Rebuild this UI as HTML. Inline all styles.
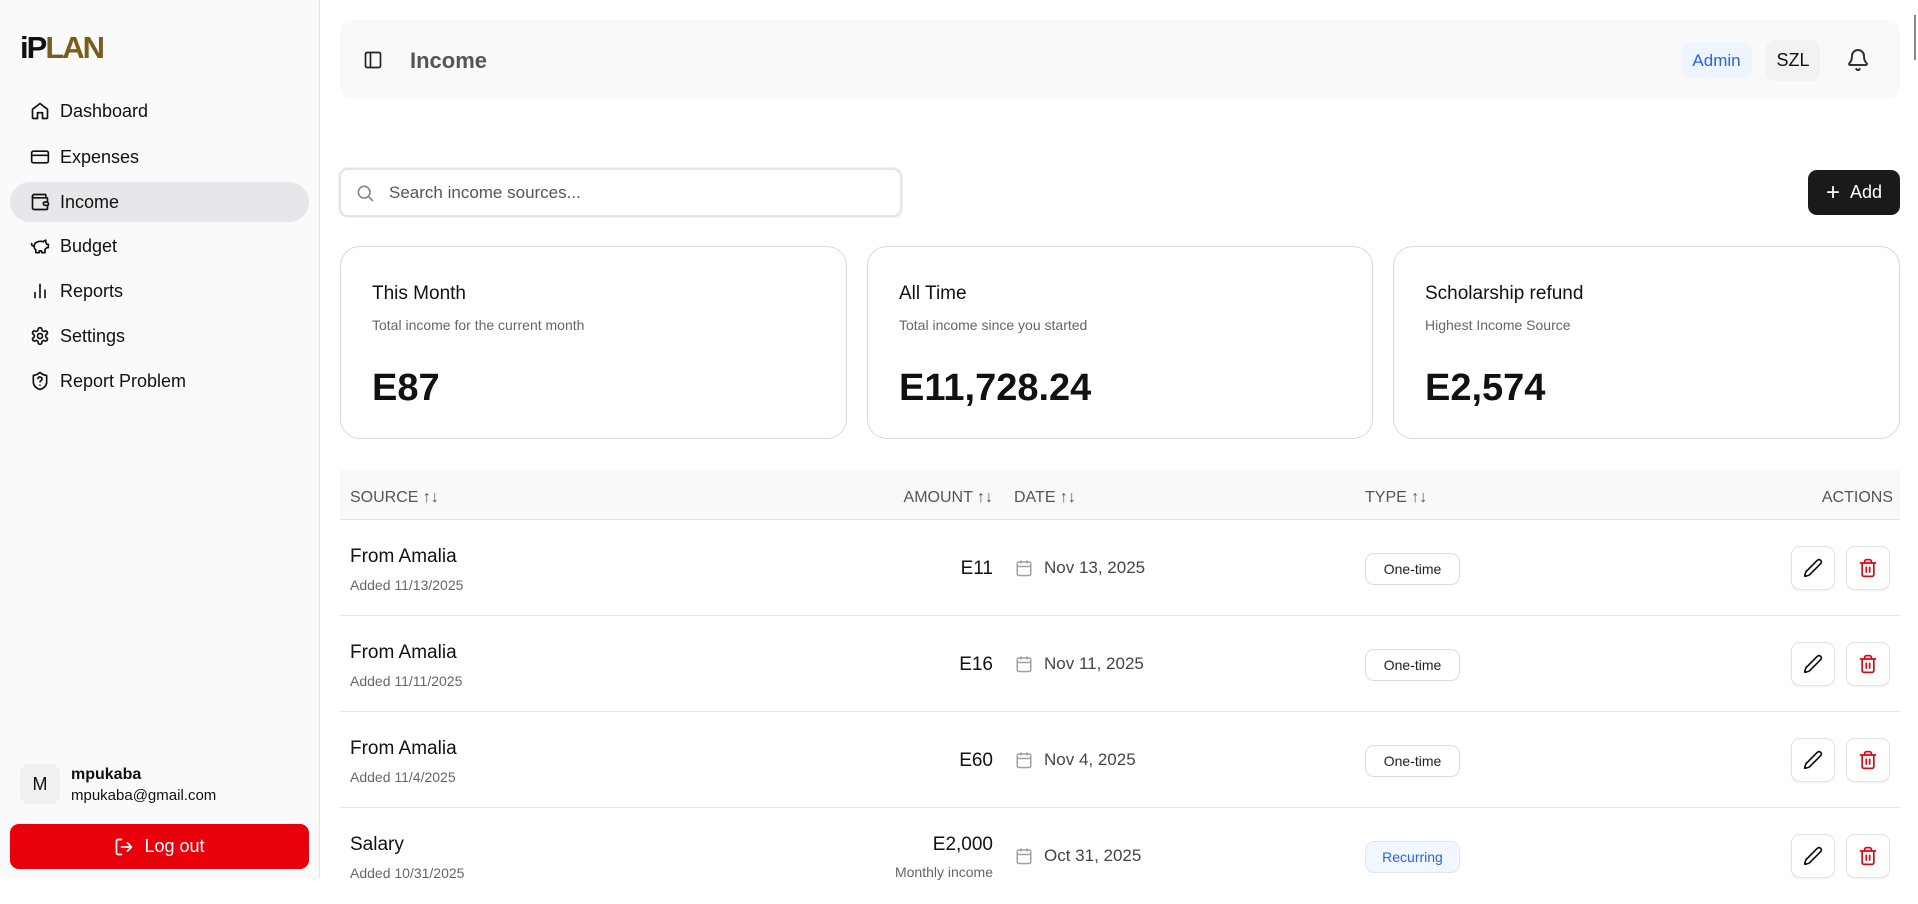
<!DOCTYPE html>
<html><head><meta charset="utf-8"><style>
*{box-sizing:border-box;margin:0;padding:0}
body{width:1918px;height:878px;overflow:hidden;background:#fff;font-family:"Liberation Sans",sans-serif;color:#111;position:relative}
.abs{position:absolute}
.side{left:0;top:0;width:320px;height:878px;background:#fafafa;border-right:1px solid #e5e5e5}
.nav{position:absolute;left:10px;width:299px;height:40px;border-radius:20px;display:flex;align-items:center;padding-left:20px;font-size:18px;color:#111}
.nav svg{width:20px;height:20px;margin-right:10px;fill:none;stroke:#111;stroke-width:2;stroke-linecap:round;stroke-linejoin:round}
.nav.active{background:#e6e7ea}
.card{position:absolute;top:246px;height:193px;border:1px solid #d9dadd;border-radius:20px;padding:0 31px}
.card .t{position:absolute;top:36px;font-size:19px;color:#111}
.card .s{position:absolute;top:70px;font-size:14px;color:#666}
.card .v{position:absolute;top:120px;font-size:38px;font-weight:bold;color:#111}
.th{position:absolute;top:489px;font-size:16px;color:#555;text-transform:uppercase}
.row{position:absolute;left:340px;width:1560px;height:96px;border-bottom:1px solid #e5e5e5}
.name{position:absolute;left:10px;font-size:19px;color:#111}
.added{position:absolute;left:10px;font-size:14px;color:#666}
.amt{position:absolute;right:907px;font-size:19px;color:#111}
.date{position:absolute;left:675px;font-size:17px;color:#444;display:flex;align-items:center}
.date svg{width:18px;height:18px;margin-right:11px;fill:none;stroke:#9aa0a6;stroke-width:2}
.pill{position:absolute;left:1025px;width:95px;height:32px;border:1px solid #ddd;border-radius:9px;font-size:14px;display:flex;align-items:center;justify-content:center;color:#222}
.btn{position:absolute;width:44px;height:44px;border:1px solid #e2e2e2;border-radius:9px;display:flex;align-items:center;justify-content:center;box-shadow:0 1px 2px rgba(0,0,0,.06)}
.btn svg{width:20px;height:20px;fill:none;stroke-width:2;stroke-linecap:round;stroke-linejoin:round}
</style></head><body>
<div class="abs side">
  <div class="abs" style="left:20px;top:30px;font-size:31px;font-weight:900;letter-spacing:-2px;font-family:'Liberation Sans',sans-serif"><span style="color:#111">i</span><span style="color:#111">P</span><span style="color:#7a5d1c">LAN</span></div>
  <div class="nav" style="top:91px"><svg viewBox="0 0 24 24"><path d="M3 10l9-7 9 7v10a1 1 0 0 1-1 1h-5v-7H9v7H4a1 1 0 0 1-1-1z"/></svg>Dashboard</div>
  <div class="nav" style="top:137px"><svg viewBox="0 0 24 24"><rect x="2" y="5" width="20" height="14" rx="2"/><path d="M2 10h20"/></svg>Expenses</div>
  <div class="nav active" style="top:182px"><svg viewBox="0 0 24 24"><path d="M19 7V4a1 1 0 0 0-1-1H5a2 2 0 0 0 0 4h15a1 1 0 0 1 1 1v4h-3a2 2 0 0 0 0 4h3a1 1 0 0 0 1-1v-2"/><path d="M3 5v14a2 2 0 0 0 2 2h15a1 1 0 0 0 1-1v-4"/></svg>Income</div>
  <div class="nav" style="top:226px"><svg viewBox="0 0 24 24"><path d="M19 5c-1.5 0-2.8 1.4-3 2-3.5-1.5-11-.3-11 5 0 1.8 0 3 2 4.5V20h4v-2h3v2h4v-4c1-.5 1.700-1 2-2h2v-4h-2c0-1-.5-1.500-1-2V5z"/><path d="M2 9v1c0 1.100.9 2 2 2h1"/></svg>Budget</div>
  <div class="nav" style="top:271px"><svg viewBox="0 0 24 24"><path d="M6 20v-6M12 20V4M18 20v-9"/></svg>Reports</div>
  <div class="nav" style="top:316px"><svg viewBox="0 0 24 24"><circle cx="12" cy="12" r="3"/><path d="M12.2 2h-.4a2 2 0 0 0-2 2v.2a2 2 0 0 1-1 1.7l-.4.3a2 2 0 0 1-2 0l-.2-.1a2 2 0 0 0-2.7.7l-.2.4a2 2 0 0 0 .7 2.7l.2.1a2 2 0 0 1 1 1.7v.5a2 2 0 0 1-1 1.7l-.2.1a2 2 0 0 0-.7 2.7l.2.4a2 2 0 0 0 2.7.7l.2-.1a2 2 0 0 1 2 0l.4.3a2 2 0 0 1 1 1.7v.2a2 2 0 0 0 2 2h.4a2 2 0 0 0 2-2v-.2a2 2 0 0 1 1-1.7l.4-.3a2 2 0 0 1 2 0l.2.1a2 2 0 0 0 2.7-.7l.2-.4a2 2 0 0 0-.7-2.7l-.2-.1a2 2 0 0 1-1-1.7v-.5a2 2 0 0 1 1-1.7l.2-.1a2 2 0 0 0 .7-2.7l-.2-.4a2 2 0 0 0-2.7-.7l-.2.1a2 2 0 0 1-2 0l-.4-.3a2 2 0 0 1-1-1.7V4a2 2 0 0 0-2-2z"/></svg>Settings</div>
  <div class="nav" style="top:361px"><svg viewBox="0 0 24 24"><path d="M20 13c0 5-3.5 7.5-7.7 9a1 1 0 0 1-.7 0C7.5 20.5 4 18 4 13V6a1 1 0 0 1 1-1c2 0 4.5-1.2 6.2-2.7a1.2 1.2 0 0 1 1.5 0C14.5 3.8 17 5 19 5a1 1 0 0 1 1 1z"/><path d="M9.5 9a2.5 2.5 0 0 1 4.9.8c0 1.700-2.4 2.200-2.4 3.200M12 17h.01"/></svg>Report Problem</div>
  <div class="abs" style="left:20px;top:764px;width:40px;height:40px;border-radius:10px;background:#f0f0f0;display:flex;align-items:center;justify-content:center;font-size:18px">M</div>
  <div class="abs" style="left:71px;top:766px;font-size:16px;font-weight:bold">mpukaba</div>
  <div class="abs" style="left:71px;top:787px;font-size:15px">mpukaba@gmail.com</div>
  <div class="abs" style="left:10px;top:824px;width:299px;height:45px;border-radius:9px;background:#e8000b;color:#fff;display:flex;align-items:center;justify-content:center;font-size:18px"><svg viewBox="0 0 24 24" width="20" height="20" style="fill:none;stroke:#fff;stroke-width:2;stroke-linecap:round;stroke-linejoin:round;margin-right:10px"><path d="M9 21H5a2 2 0 0 1-2-2V5a2 2 0 0 1 2-2h4M16 17l5-5-5-5M21 12H9"/></svg>Log out</div>
</div>
<div class="abs" style="left:1914px;top:15px;width:2px;height:45px;background:#888"></div>
<div class="abs" style="left:340px;top:20px;width:1560px;height:79px;background:#f9f9f9;border-radius:12px"></div>
<svg class="abs" style="left:363px;top:50px" width="20" height="20" viewBox="0 0 24 24" fill="none" stroke="#222" stroke-width="2"><rect x="3" y="3" width="18" height="18" rx="2"/><path d="M9 3v18"/></svg>
<div class="abs" style="left:410px;top:48px;font-size:22px;font-weight:bold;color:#555">Income</div>
<div class="abs" style="left:1681px;top:43px;width:71px;height:35px;border-radius:9px;background:#eef5ff;color:#2563eb;font-size:17px;display:flex;align-items:center;justify-content:center">Admin</div>
<div class="abs" style="left:1766px;top:40px;width:54px;height:41px;border-radius:9px;background:#f2f2f2;color:#111;font-size:18px;display:flex;align-items:center;justify-content:center">SZL</div>
<svg class="abs" style="left:1846px;top:48px" width="24" height="24" viewBox="0 0 24 24" fill="none" stroke="#333" stroke-width="2" stroke-linecap="round"><path d="M10.3 21a1.9 1.9 0 0 0 3.4 0M3.3 15.3A1 1 0 0 0 4 17h16a1 1 0 0 0 .7-1.7C19.4 14 18 12.5 18 8A6 6 0 0 0 6 8c0 4.5-1.4 6-2.7 7.3"/></svg>
<div class="abs" style="left:339px;top:168px;width:563px;height:49px;border:2px solid #e3e5e8;border-radius:9px;box-shadow:0 0 0 1px #f0f0f0"></div>
<svg class="abs" style="left:355px;top:183px" width="20" height="20" viewBox="0 0 24 24" fill="none" stroke="#888" stroke-width="2" stroke-linecap="round"><circle cx="11" cy="11" r="7"/><path d="M21 21l-4.3-4.3"/></svg>
<div class="abs" style="left:389px;top:183px;font-size:17px;color:#555">Search income sources...</div>
<div class="abs" style="left:1808px;top:170px;width:92px;height:45px;border-radius:9px;background:#1a1a1a;color:#fff;font-size:18px;display:flex;align-items:center;justify-content:center"><span style="font-size:24px;margin-right:10px;line-height:1">+</span>Add</div>
<div class="card" style="left:340px;width:507px"><div class="t">This Month</div><div class="s">Total income for the current month</div><div class="v">E87</div></div>
<div class="card" style="left:867px;width:506px"><div class="t">All Time</div><div class="s">Total income since you started</div><div class="v">E11,728.24</div></div>
<div class="card" style="left:1393px;width:507px"><div class="t">Scholarship refund</div><div class="s">Highest Income Source</div><div class="v">E2,574</div></div>
<div class="abs" style="left:340px;top:470px;width:1560px;height:50px;background:#f8f9fa;border-bottom:1px solid #e2e2e2"></div>
<div class="th" style="left:350px">Source ↑↓</div>
<div class="th" style="right:925px">Amount ↑↓</div>
<div class="th" style="left:1014px">Date ↑↓</div>
<div class="th" style="left:1365px">Type ↑↓</div>
<div class="th" style="right:25px">Actions</div>

<div class="row" style="top:520px"><div class="name" style="top:26px">From Amalia</div><div class="added" style="top:57px">Added 11/13/2025</div><div class="amt" style="top:38px">E11</div><div class="date" style="top:38px"><svg viewBox="0 0 24 24"><rect x="3" y="4" width="18" height="18" rx="2"/><path d="M8 2v4M16 2v4M3 10h18"/></svg>Nov 13, 2025</div><div class="pill" style="top:33px">One-time</div>
<div class="btn" style="left:1451px;top:26px"><svg viewBox="0 0 24 24" stroke="#111"><path d="M21.2 6.8a2.8 2.8 0 0 0-4-4L3.8 16.2a2 2 0 0 0-.5.8l-1.3 4.4a.5.5 0 0 0 .6.6l4.4-1.3a2 2 0 0 0 .8-.5z"/></svg></div>
<div class="btn" style="left:1506px;top:26px"><svg viewBox="0 0 24 24" stroke="#e8000b"><path d="M3 6h18M19 6v14a2 2 0 0 1-2 2H7a2 2 0 0 1-2-2V6M8 6V4a2 2 0 0 1 2-2h4a2 2 0 0 1 2 2v2M10 11v6M14 11v6"/></svg></div></div>

<div class="row" style="top:616px"><div class="name" style="top:26px">From Amalia</div><div class="added" style="top:57px">Added 11/11/2025</div><div class="amt" style="top:38px">E16</div><div class="date" style="top:38px"><svg viewBox="0 0 24 24"><rect x="3" y="4" width="18" height="18" rx="2"/><path d="M8 2v4M16 2v4M3 10h18"/></svg>Nov 11, 2025</div><div class="pill" style="top:33px">One-time</div>
<div class="btn" style="left:1451px;top:26px"><svg viewBox="0 0 24 24" stroke="#111"><path d="M21.2 6.8a2.8 2.8 0 0 0-4-4L3.8 16.2a2 2 0 0 0-.5.8l-1.3 4.4a.5.5 0 0 0 .6.6l4.4-1.3a2 2 0 0 0 .8-.5z"/></svg></div>
<div class="btn" style="left:1506px;top:26px"><svg viewBox="0 0 24 24" stroke="#e8000b"><path d="M3 6h18M19 6v14a2 2 0 0 1-2 2H7a2 2 0 0 1-2-2V6M8 6V4a2 2 0 0 1 2-2h4a2 2 0 0 1 2 2v2M10 11v6M14 11v6"/></svg></div></div>

<div class="row" style="top:712px"><div class="name" style="top:26px">From Amalia</div><div class="added" style="top:57px">Added 11/4/2025</div><div class="amt" style="top:38px">E60</div><div class="date" style="top:38px"><svg viewBox="0 0 24 24"><rect x="3" y="4" width="18" height="18" rx="2"/><path d="M8 2v4M16 2v4M3 10h18"/></svg>Nov 4, 2025</div><div class="pill" style="top:33px">One-time</div>
<div class="btn" style="left:1451px;top:26px"><svg viewBox="0 0 24 24" stroke="#111"><path d="M21.2 6.8a2.8 2.8 0 0 0-4-4L3.8 16.2a2 2 0 0 0-.5.8l-1.3 4.4a.5.5 0 0 0 .6.6l4.4-1.3a2 2 0 0 0 .8-.5z"/></svg></div>
<div class="btn" style="left:1506px;top:26px"><svg viewBox="0 0 24 24" stroke="#e8000b"><path d="M3 6h18M19 6v14a2 2 0 0 1-2 2H7a2 2 0 0 1-2-2V6M8 6V4a2 2 0 0 1 2-2h4a2 2 0 0 1 2 2v2M10 11v6M14 11v6"/></svg></div></div>

<div class="row" style="top:808px;border:none"><div class="name" style="top:26px">Salary</div><div class="added" style="top:57px">Added 10/31/2025</div><div class="amt" style="top:26px">E2,000</div><div class="amt" style="top:56px;font-size:14px;color:#666">Monthly income</div><div class="date" style="top:38px"><svg viewBox="0 0 24 24"><rect x="3" y="4" width="18" height="18" rx="2"/><path d="M8 2v4M16 2v4M3 10h18"/></svg>Oct 31, 2025</div><div class="pill" style="top:33px;background:#f2f7ff;color:#2563eb;border-color:#e0e6ef">Recurring</div>
<div class="btn" style="left:1451px;top:26px"><svg viewBox="0 0 24 24" stroke="#111"><path d="M21.2 6.8a2.8 2.8 0 0 0-4-4L3.8 16.2a2 2 0 0 0-.5.8l-1.3 4.4a.5.5 0 0 0 .6.6l4.4-1.3a2 2 0 0 0 .8-.5z"/></svg></div>
<div class="btn" style="left:1506px;top:26px"><svg viewBox="0 0 24 24" stroke="#e8000b"><path d="M3 6h18M19 6v14a2 2 0 0 1-2 2H7a2 2 0 0 1-2-2V6M8 6V4a2 2 0 0 1 2-2h4a2 2 0 0 1 2 2v2M10 11v6M14 11v6"/></svg></div></div>
</body></html>
